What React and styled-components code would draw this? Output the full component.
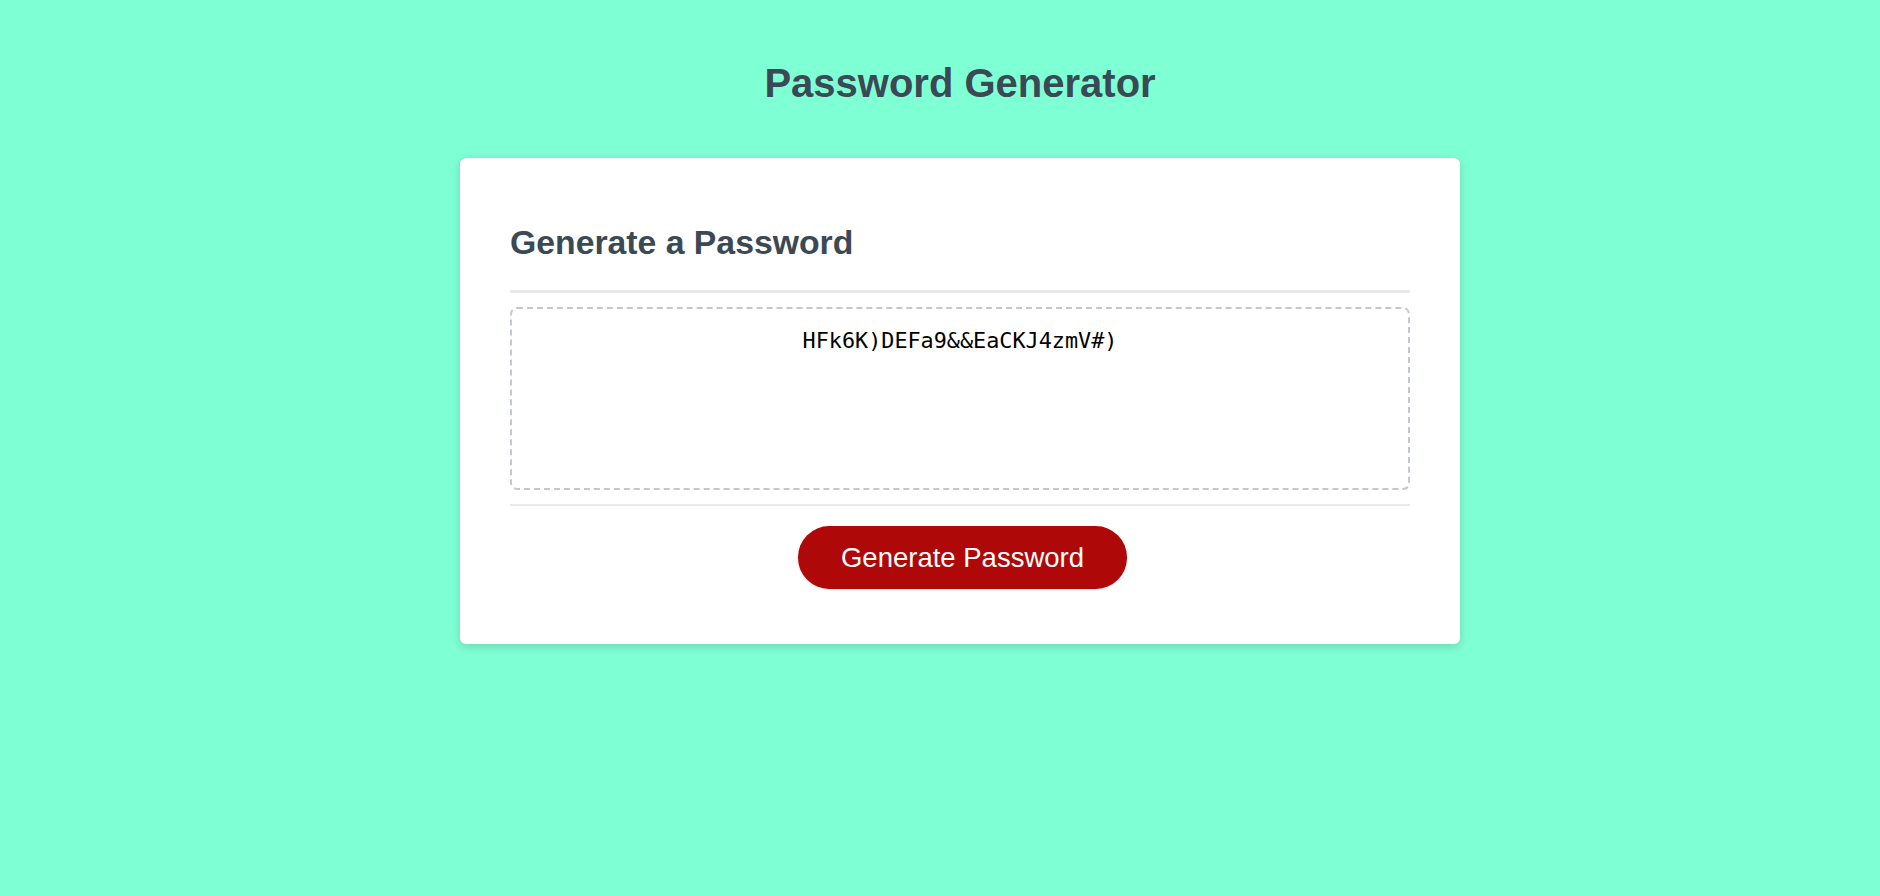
import React from "react";
import styled, { createGlobalStyle } from "styled-components";

const GlobalStyle = createGlobalStyle`
  *, *::before, *::after {
    box-sizing: border-box;
  }
  html, body {
    margin: 0;
    padding: 0;
    height: 100%;
  }
  body {
    background-color: #7fffd4;
    font-family: "Liberation Sans", Arial, sans-serif;
  }
`;

const Wrapper = styled.div`
  padding: 60px 5px 40px 45px;
`;

const Header = styled.header`
  text-align: center;
  color: #3b4954;

  h1 {
    margin: 0 0 52px;
    font-size: 40px;
    line-height: 46px;
    font-weight: bold;
  }
`;

const Card = styled.div`
  max-width: 1000px;
  margin: 0 auto;
  padding: 37px 50px;
  background: #ffffff;
  border-radius: 6px;
  box-shadow: rgba(0, 0, 0, 0.15) 0 2.5px 10px 0;
  color: #3b4954;
  font-size: 22.5px;
`;

const Divider = styled.div`
  width: 100%;
  height: 2.5px;
  background: #e7e9eb;
`;

const CardHeader = styled.div`
  h2 {
    margin: 28px 0;
    font-size: 33.75px;
    font-weight: bold;
  }
`;

const PasswordBox = styled.textarea`
  display: block;
  width: 100%;
  height: 183px;
  margin: 14px 0;
  padding: 19px;
  border: 2px dashed #c3c7ce;
  border-radius: 7px;
  font-family: "DejaVu Sans Mono", "Liberation Mono", monospace;
  font-size: 21.8px;
  color: #000;
  text-align: center;
  resize: none;
  outline: none;
  background: #fff;
`;

const CardFooter = styled.div`
  display: flex;
  justify-content: center;
`;

const Button = styled.button`
  border: none;
  background-color: #af0808;
  color: #ffffff;
  border-radius: 31.25px;
  font-family: "Liberation Sans", Arial, sans-serif;
  font-size: 27.5px;
  line-height: 27.5px;
  padding: 17.5px 42.5px;
  margin: 20px 20px 18px 25px;
  box-shadow: rgba(0, 0, 0, 0.1) 0 1px 2px 0;
  cursor: pointer;
`;

export default function App() {
  return (
    <>
      <GlobalStyle />
      <Wrapper>
        <Header>
          <h1>Password Generator</h1>
        </Header>
        <Card>
          <CardHeader>
            <h2>Generate a Password</h2>
          </CardHeader>
          <Divider />
          <PasswordBox
            readOnly
            value="HFk6K)DEFa9&&EaCKJ4zmV#)"
            aria-label="Generated Password"
          />
          <Divider />
          <CardFooter>
            <Button type="button">Generate Password</Button>
          </CardFooter>
        </Card>
      </Wrapper>
    </>
  );
}
